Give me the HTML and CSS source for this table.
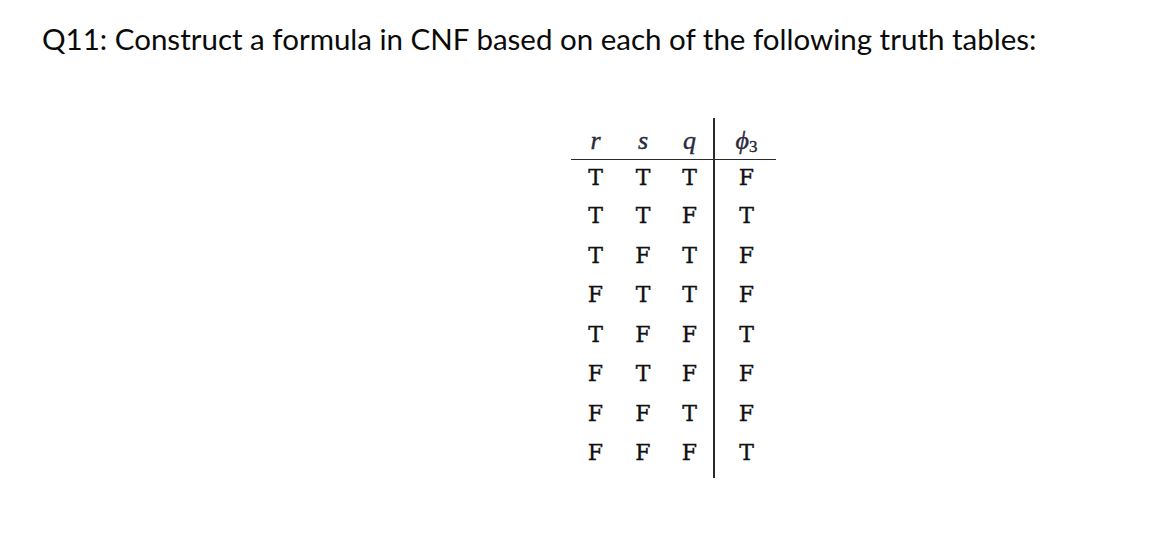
FILE: index.html
```html
<!DOCTYPE html>
<html>
<head>
<meta charset="utf-8">
<link rel="stylesheet" href="styles.css">
</head>
<body>
<h1 class="question">Q11: Construct a formula in CNF based on each of the following truth tables:</h1>
<div class="truth">
  <div class="row head">
    <span class="c c1 var">r</span><span class="c c2 var">s</span><span class="c c3 var">q</span><span class="c c4 var">ϕ<sub>3</sub></span>
  </div>
  <div class="row first"><span class="c c1">T</span><span class="c c2">T</span><span class="c c3">T</span><span class="c c4">F</span></div>
  <div class="row"><span class="c c1">T</span><span class="c c2">T</span><span class="c c3">F</span><span class="c c4">T</span></div>
  <div class="row"><span class="c c1">T</span><span class="c c2">F</span><span class="c c3">T</span><span class="c c4">F</span></div>
  <div class="row"><span class="c c1">F</span><span class="c c2">T</span><span class="c c3">T</span><span class="c c4">F</span></div>
  <div class="row"><span class="c c1">T</span><span class="c c2">F</span><span class="c c3">F</span><span class="c c4">T</span></div>
  <div class="row"><span class="c c1">F</span><span class="c c2">T</span><span class="c c3">F</span><span class="c c4">F</span></div>
  <div class="row"><span class="c c1">F</span><span class="c c2">F</span><span class="c c3">T</span><span class="c c4">F</span></div>
  <div class="row"><span class="c c1">F</span><span class="c c2">F</span><span class="c c3">F</span><span class="c c4">T</span></div>
  <div class="row tail"><span class="c c1"></span><span class="c c2"></span><span class="c c3"></span><span class="c c4"></span></div>
</div>
</body>
</html>
```
FILE: styles.css
```css
html, body {
  margin: 0;
  padding: 0;
  background: #ffffff;
}
body {
  width: 1152px;
  height: 554px;
  overflow: hidden;
}
.question {
  margin: 0;
  padding: 22px 0 0 42px;
  font-family: "Lato", "Liberation Sans", sans-serif;
  font-weight: 400;
  font-size: 29.5px;
  line-height: 34px;
  color: #0a0a0a;
  white-space: nowrap;
}
.truth {
  margin: 62px 0 0 571px;
  width: 205px;
  font-family: "DejaVu Serif", "Liberation Serif", serif;
  font-size: 22px;
  color: #111111;
  -webkit-text-stroke: 0.35px #111111;
}
.row {
  display: flex;
  height: 39.5px;
  line-height: 39.5px;
}
.row.first {
  height: 36px;
  line-height: 36px;
}
.row.head {
  height: 41px;
  line-height: 46px;
  border-bottom: 1.5px solid #2a2a2a;
}
.row.tail {
  height: 5px;
}
.c {
  display: block;
  text-align: center;
}
.c1 { width: 49px; }
.c2 { width: 46px; }
.c3 { width: 47px; }
.c4 {
  width: 63px;
  border-left: 2px solid #2a2a2a;
  padding-left: 2px;
  box-sizing: border-box;
}
.var {
  font-family: "Liberation Serif", "DejaVu Serif", serif;
  font-style: italic;
  font-size: 26px;
  color: #2a2a3a;
  -webkit-text-stroke: 0.4px #2a2a3a;
}
.var sub {
  font-style: normal;
  font-size: 17px;
  line-height: 0;
  vertical-align: -3px;
}
```
